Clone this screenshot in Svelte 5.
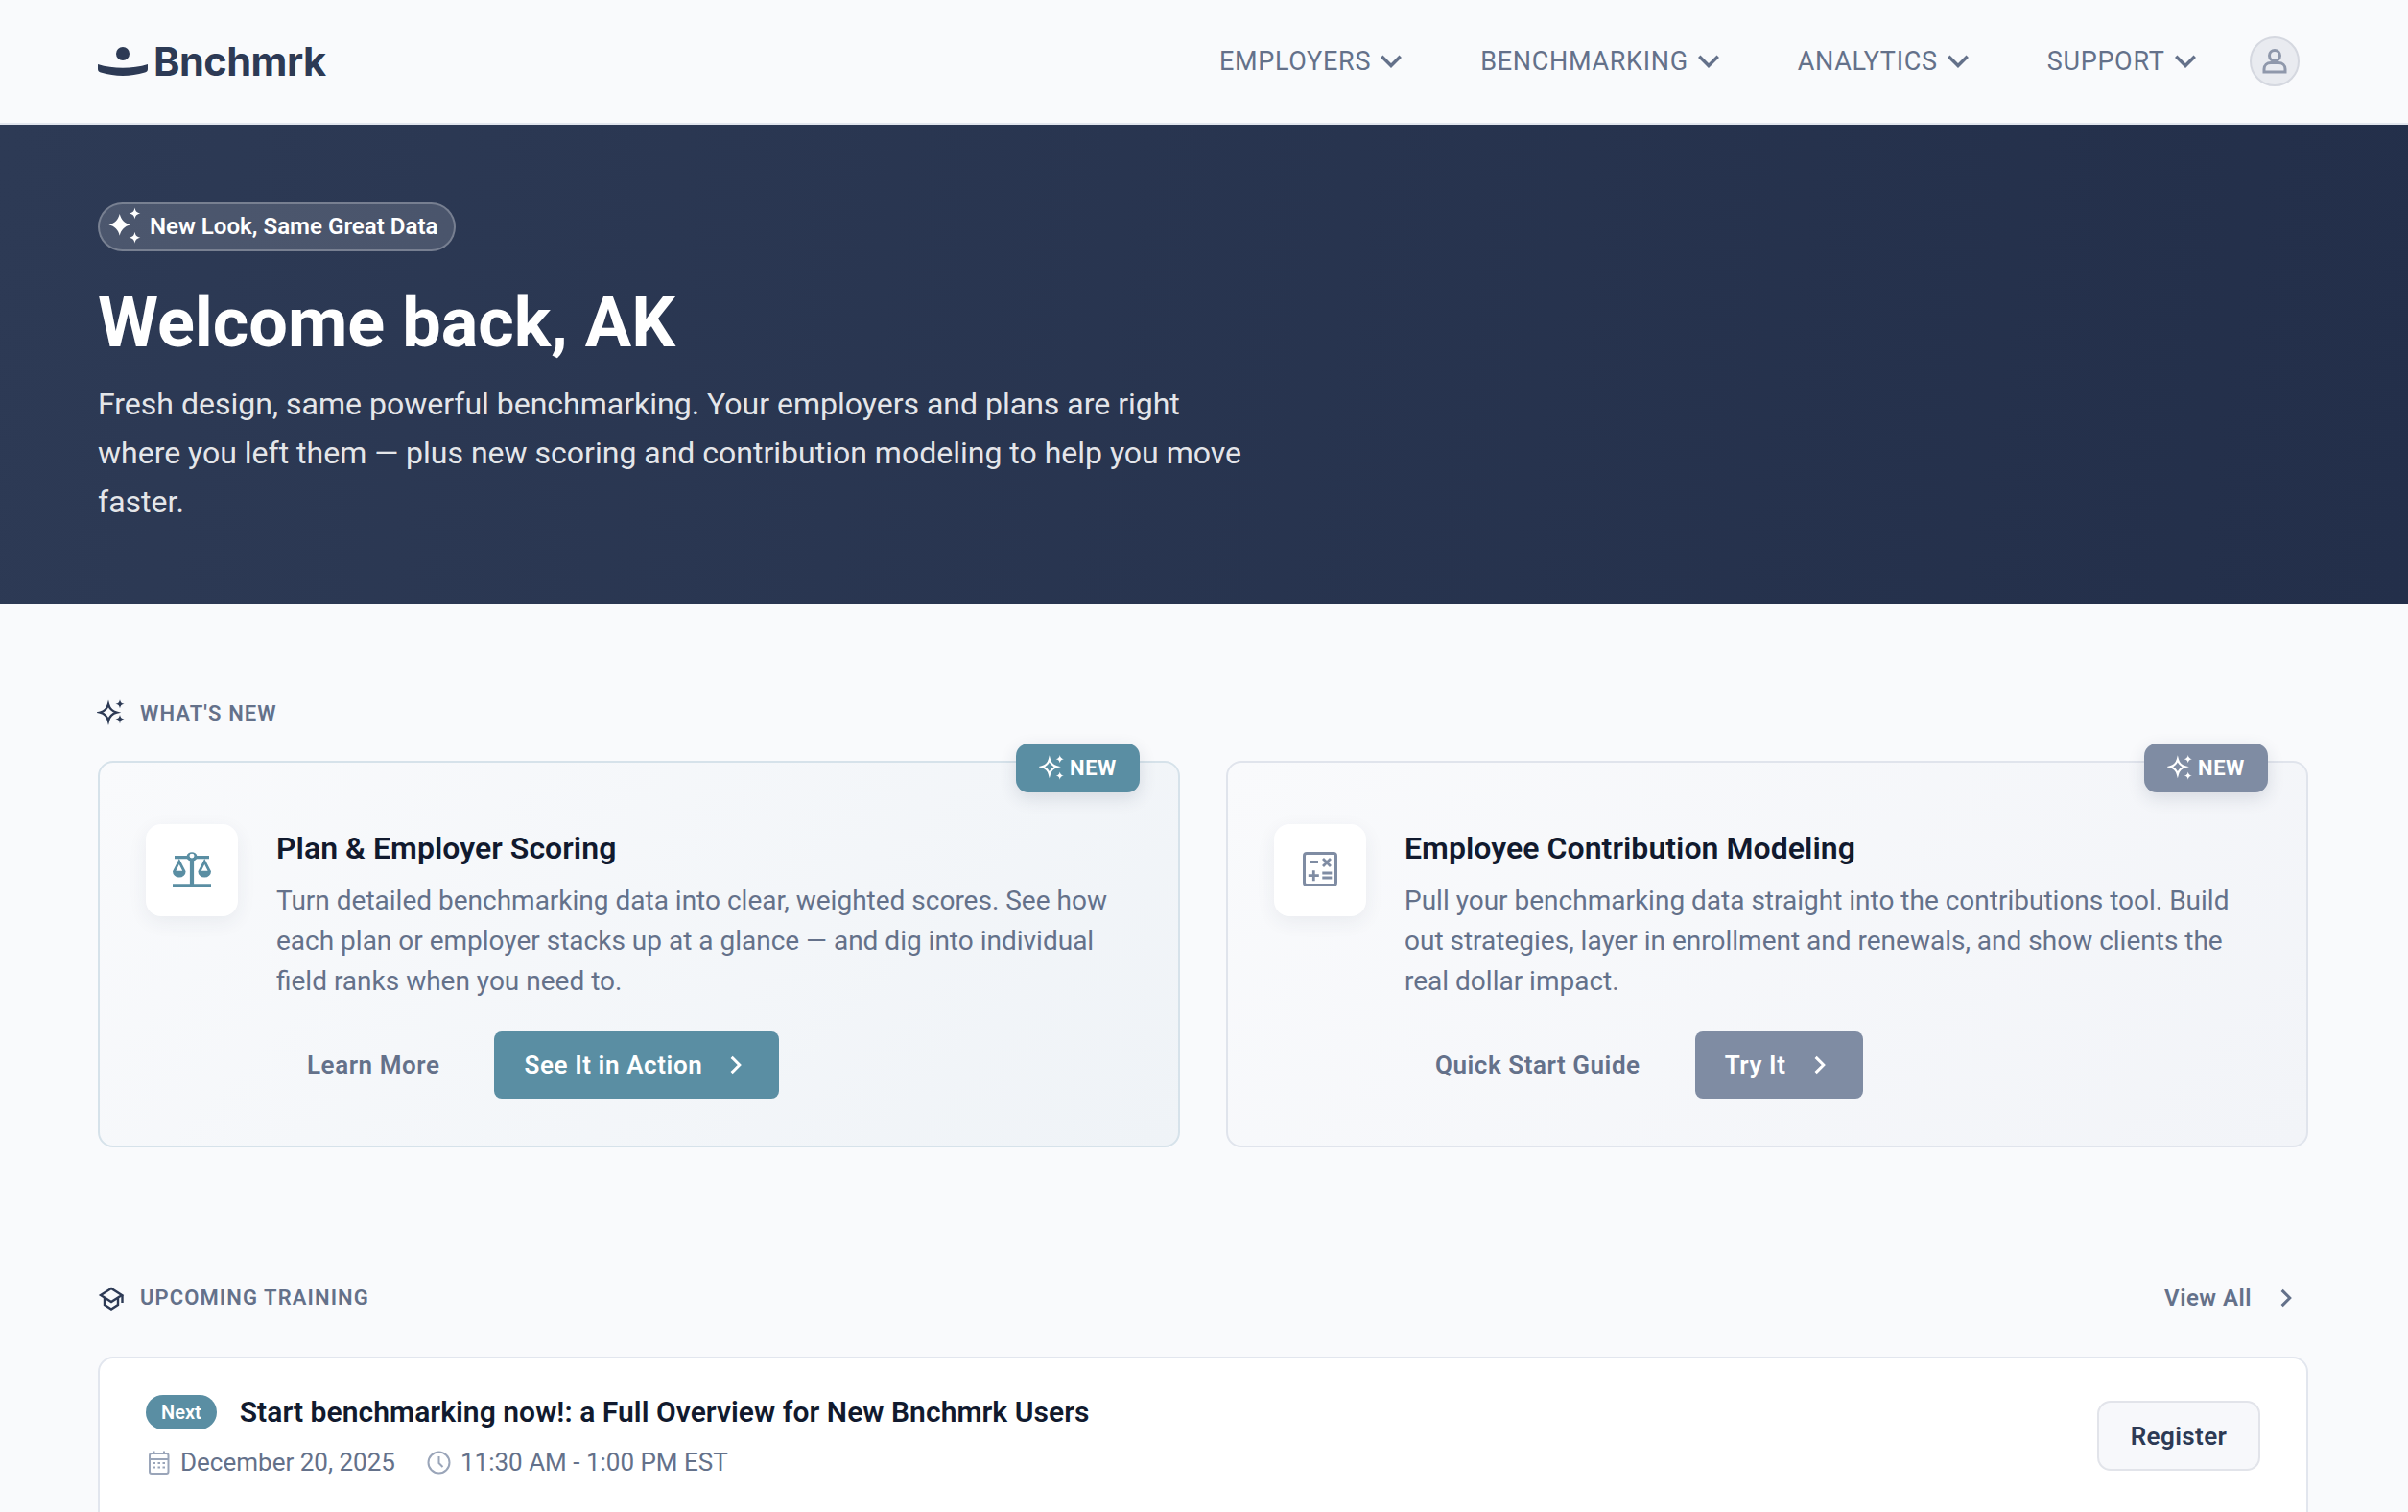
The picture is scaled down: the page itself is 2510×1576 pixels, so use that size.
<script>
    const navItems = ["EMPLOYERS", "BENCHMARKING", "ANALYTICS", "SUPPORT"];
    const sparkle = "M9 4.500c1 3.700 2.800 5.500 6.500 6.500-3.700 1-5.500 2.800-6.500 6.500-1-3.700-2.800-5.500-6.500-6.500C6.200 10 8 8.200 9 4.500Z";
    const sparkleSmallA = "M18 .9c.4 2.200 1.200 3 3.400 3.400-2.200.4-3 1.200-3.400 3.400-.4-2.200-1.200-3-3.400-3.400 2.200-.4 3-1.200 3.400-3.400Z";
    const sparkleSmallB = "M18 15.300c.4 2.200 1.200 3 3.400 3.400-2.200.4-3 1.200-3.400 3.400-.4-2.200-1.200-3-3.400-3.400 2.200-.4 3-1.200 3.400-3.400Z";
</script>

<div class="page">
    <header class="topbar">
        <div class="brand">
            <svg class="brand-mark" viewBox="0 0 52 32" aria-hidden="true">
                <circle cx="26" cy="7" r="7" fill="#2d3a55" />
                <path d="M0 18c8 2.500 17 3.700 26 3.700s18-1.200 26-3.700v5c0 2-1 3-3 3.500C41 28.500 34 30 26 30S11 28.500 3 26.500C1 26 0 25 0 23Z" fill="#2d3a55" />
            </svg>
            <span class="brand-name">Bnchmrk</span>
        </div>
        <nav class="nav">
            {#each navItems as item}
                <button type="button" class="nav-item">
                    {item}
                    <svg viewBox="0 0 24 24" class="nav-chevron" aria-hidden="true"><path d="M5.500 8.500 12 15l6.500-6.500" /></svg>
                </button>
            {/each}
            <div class="avatar">
                <svg viewBox="0 0 48 48" aria-hidden="true">
                    <circle cx="24" cy="18" r="5.500" />
                    <path d="M13 35v-3c0-4 3-6.500 7-6.500h8c4 0 7 2.500 7 6.500v3Z" />
                </svg>
            </div>
        </nav>
    </header>

    <section class="hero">
        <div class="hero-pill">
            <svg viewBox="0 0 24 24" aria-hidden="true">
                <path d={sparkle} fill="#fff" /><path d={sparkleSmallA} fill="#fff" /><path d={sparkleSmallB} fill="#fff" />
            </svg>
            New Look, Same Great Data
        </div>
        <h1>Welcome back, AK</h1>
        <p>Fresh design, same powerful benchmarking. Your employers and plans are right where you left them — plus new scoring and contribution modeling to help you move faster.</p>
    </section>

    <main class="content">
        <div class="section-head">
            <svg viewBox="0 0 24 24" class="section-icon sparkle-icon" aria-hidden="true">
                <path d={sparkle} class="outline" /><path d={sparkleSmallA} class="solid" /><path d={sparkleSmallB} class="solid" transform="translate(0 -2.500)" />
            </svg>
            <span>WHAT'S NEW</span>
        </div>

        <div class="cards">
            <article class="card card-teal">
                <div class="new-tag">
                    <svg viewBox="0 0 24 24" aria-hidden="true">
                        <path d={sparkle} class="tag-outline" /><path d={sparkleSmallA} fill="#fff" /><path d={sparkleSmallB} fill="#fff" />
                    </svg>
                    NEW
                </div>
                <div class="tile">
                    <svg class="scale-icon" viewBox="0 0 40 41" preserveAspectRatio="none" aria-hidden="true">
                        <path d="M2 5.500h12.700a5.500 5.500 0 0 1 10.600 0H38V9H25a5.500 5.500 0 0 1-2.900 2.100V37H40v4H0v-4h17.900V11.100A5.500 5.500 0 0 1 15 9H2ZM20 3a2.500 2.500 0 1 0 0 5 2.500 2.500 0 0 0 0-5Z" fill="#5a8ea3" fill-rule="evenodd" />
                        <path d="M6.800 8.500 0 23a6.800 6.800 0 0 0 13.600 0ZM6.800 15l-3.400 7.500h6.800Z" fill="#5a8ea3" fill-rule="evenodd" />
                        <path d="M33.200 8.500 26.400 23a6.800 6.800 0 0 0 13.600 0ZM33.200 15l-3.400 7.500h6.800Z" fill="#5a8ea3" fill-rule="evenodd" />
                    </svg>
                </div>
                <div class="card-body">
                    <h3>Plan &amp; Employer Scoring</h3>
                    <p>Turn detailed benchmarking data into clear, weighted scores. See how each plan or employer stacks up at a glance — and dig into individual field ranks when you need to.</p>
                    <div class="actions">
                        <button type="button" class="link-btn">Learn More</button>
                        <button type="button" class="solid-btn teal">
                            See It in Action
                            <svg viewBox="0 0 24 24" aria-hidden="true"><path d="M8.500 5.500 15 12l-6.500 6.500" /></svg>
                        </button>
                    </div>
                </div>
            </article>

            <article class="card card-slate">
                <div class="new-tag slate">
                    <svg viewBox="0 0 24 24" aria-hidden="true">
                        <path d={sparkle} class="tag-outline" /><path d={sparkleSmallA} fill="#fff" /><path d={sparkleSmallB} fill="#fff" />
                    </svg>
                    NEW
                </div>
                <div class="tile">
                    <svg class="calc-icon" viewBox="0 0 36 36" aria-hidden="true">
                        <rect x="1.500" y="1.500" width="33" height="33" rx="2.500" fill="none" stroke="#7f8ca3" stroke-width="3" />
                        <path d="M7 10.500h9M5.800 24.700h11M11.300 19.200v11M20.300 22h10M20.300 27h10M21 7l8 8M29 7l-8 8" stroke="#7f8ca3" stroke-width="2.800" fill="none" />
                    </svg>
                </div>
                <div class="card-body">
                    <h3>Employee Contribution Modeling</h3>
                    <p>Pull your benchmarking data straight into the contributions tool. Build out strategies, layer in enrollment and renewals, and show clients the real dollar impact.</p>
                    <div class="actions">
                        <button type="button" class="link-btn">Quick Start Guide</button>
                        <button type="button" class="solid-btn slate">
                            Try It
                            <svg viewBox="0 0 24 24" aria-hidden="true"><path d="M8.500 5.500 15 12l-6.500 6.500" /></svg>
                        </button>
                    </div>
                </div>
            </article>
        </div>

        <div class="section-head training-head">
            <svg viewBox="0 0 32 32" class="section-icon" aria-hidden="true">
                <path d="M17 6 6 13l11 7 11-7Z" class="hat" />
                <path d="M10 16v7l7 4.500 7-4.500v-7M28.500 13v8" class="hat" />
            </svg>
            <span>UPCOMING TRAINING</span>
            <button type="button" class="view-all">
                View All
                <svg viewBox="0 0 24 24" aria-hidden="true"><path d="M8.500 5.500 15 12l-6.500 6.500" /></svg>
            </button>
        </div>

        <div class="training">
            <div class="training-info">
                <div class="training-title">
                    <span class="next">Next</span>
                    <h4>Start benchmarking now!: a Full Overview for New Bnchmrk Users</h4>
                </div>
                <div class="training-meta">
                    <span>
                        <svg viewBox="0 0 27 27" aria-hidden="true">
                            <rect x="4" y="4" width="19.500" height="21" rx="2" class="meta-line" />
                            <path d="M4 10h19.500M8.500 1.500V5M19 1.500V5" class="meta-line" />
                            <path d="M7.500 14h2.500M12.500 14H15M17.500 14H20M7.500 18.500h2.500M12.500 18.500H15M17.500 18.500H20" class="meta-line" />
                        </svg>
                        December 20, 2025
                    </span>
                    <span>
                        <svg viewBox="0 0 27 27" aria-hidden="true">
                            <circle cx="13.500" cy="13.500" r="11" class="meta-line" />
                            <path d="M13.500 7v7l4 4" class="meta-line" />
                        </svg>
                        11:30 AM - 1:00 PM EST
                    </span>
                </div>
            </div>
            <button type="button" class="register">Register</button>
        </div>
    </main>
</div>

<style>
    :global(body) {
        overflow: hidden;
        background: #f9fafc;
    }
    .page {
        height: 1576px;
        overflow: hidden;
        font-family: Roboto, "Liberation Sans", sans-serif;
        background: #f9fafc;
        color: #64748b;
    }
    button {
        font-family: inherit;
        border: none;
        background: none;
        cursor: pointer;
        padding: 0;
    }

    .topbar {
        height: 130px;
        box-sizing: border-box;
        display: flex;
        align-items: center;
        justify-content: space-between;
        padding: 0 113px 0 102px;
        border-bottom: 2px solid #e2e6ee;
    }
    .brand {
        display: flex;
        align-items: center;
        gap: 6px;
        padding-top: 2px;
    }
    .brand-mark { width: 52px; height: 32px; }
    .brand-name {
        font-family: Inter, sans-serif;
        font-size: 41.500px;
        font-weight: 700;
        letter-spacing: -0.5px;
        color: #2d3a55;
        line-height: 1;
    }
    .nav {
        display: flex;
        align-items: center;
    }
    .nav-item {
        display: flex;
        align-items: center;
        gap: 3px;
        margin-right: 75px;
        font-size: 27px;
        letter-spacing: 0.7px;
        color: #64718a;
    }
    .nav-item:nth-child(4) { margin-right: 49.500px; }
    .nav-chevron {
        width: 36px;
        height: 36px;
        fill: none;
        stroke: #64718a;
        stroke-width: 2.300;
    }
    .avatar {
        width: 52px;
        height: 52px;
        border-radius: 50%;
        background: #e9ebf0;
        border: 2px solid #d5d8e0;
        display: flex;
        align-items: center;
        justify-content: center;
        box-sizing: border-box;
    }
    .avatar svg { width: 48px; height: 48px; flex: none; fill: none; stroke: #8f98ab; stroke-width: 3; }

    .hero {
        height: 500px;
        box-sizing: border-box;
        padding: 81px 102px 0;
        background: linear-gradient(100deg, #2d3a55 0%, #232f4a 100%);
        color: #fff;
    }
    .hero-pill {
        display: inline-flex;
        align-items: center;
        gap: 5px;
        height: 51px;
        box-sizing: border-box;
        padding: 0 16px 1px 5px;
        border: 2px solid rgba(255, 255, 255, 0.25);
        border-radius: 26px;
        background: rgba(255, 255, 255, 0.15);
        font-size: 24.100px;
        font-weight: 600;
    }
    .hero-pill svg { width: 42px; height: 42px; }
    .hero h1 {
        margin: 32px 0 0;
        font-size: 72px;
        font-weight: 700;
        line-height: 86px;
    }
    .hero p {
        margin: 16px 0 0;
        max-width: 1200px;
        font-size: 32px;
        line-height: 51.200px;
        color: rgba(255, 255, 255, 0.9);
    }

    .content { padding: 0 104px 0 102px; }
    .section-head {
        display: flex;
        align-items: center;
        gap: 15px;
        padding-top: 98px;
        font-size: 22px;
        font-weight: 600;
        letter-spacing: 1.100px;
        color: #64718a;
        line-height: 30px;
    }
    .section-icon { width: 32px; height: 32px; margin-left: -3px; flex: none; }
    .sparkle-icon { margin-left: -1px; margin-right: -2px; }
    .outline { fill: none; stroke: #2d3a55; stroke-width: 1.800; }
    .solid { fill: #2d3a55; }
    .hat { fill: none; stroke: #2d3a55; stroke-width: 2.400; }

    .cards {
        display: grid;
        grid-template-columns: 1fr 1fr;
        gap: 48px;
        margin-top: 33px;
    }
    .card {
        position: relative;
        display: flex;
        gap: 40px;
        height: 403px;
        box-sizing: border-box;
        padding: 64px 48px 0;
        border: 2px solid #e0e4ec;
        border-radius: 16px;
    }
    .card-teal {
        border-color: #d6e2ea;
        background: linear-gradient(135deg, #f9fafc 0%, #eff3f7 100%);
    }
    .card-slate {
        background: linear-gradient(135deg, #f9fafc 0%, #f2f4f8 100%);
    }
    .new-tag {
        position: absolute;
        top: -20px;
        right: 40px;
        display: flex;
        align-items: center;
        justify-content: center;
        gap: 3px;
        width: 129px;
        height: 51px;
        border-radius: 13px;
        background: #5a8ea3;
        color: #fff;
        font-size: 22px;
        font-weight: 700;
        letter-spacing: 0.6px;
        box-shadow: 0 6px 18px rgba(45, 58, 85, 0.14);
    }
    .new-tag.slate { background: #7f8ca3; }
    .new-tag svg { width: 29px; height: 29px; }
    .tag-outline { fill: none; stroke: #fff; stroke-width: 1.800; }
    .tile {
        flex: none;
        width: 96px;
        height: 96px;
        border-radius: 16px;
        background: #fff;
        display: flex;
        align-items: center;
        justify-content: center;
        box-shadow: 0 6px 20px rgba(45, 58, 85, 0.07);
    }
    .scale-icon { width: 40px; height: 38px; margin-top: -2px; }
    .calc-icon { width: 36px; height: 36px; margin-top: -2px; }
    .card-body { flex: 1; min-width: 0; }
    .card-body h3 {
        margin: 5px 0 0;
        font-size: 32px;
        font-weight: 600;
        letter-spacing: 0.05px;
        line-height: 40px;
        color: #111a2e;
    }
    .card-body p {
        margin: 14px 0 0;
        font-size: 28px;
        line-height: 42px;
        color: #64718a;
    }
    .actions {
        display: flex;
        align-items: center;
        gap: 57px;
        margin-top: 31px;
        padding-left: 32px;
    }
    .link-btn {
        font-size: 26px;
        font-weight: 600;
        letter-spacing: 0.55px;
        color: #64718a;
    }
    .solid-btn {
        display: flex;
        align-items: center;
        gap: 20px;
        height: 70px;
        padding: 0 30px 0 31px;
        border-radius: 8px;
        color: #fff;
        font-size: 26px;
        font-weight: 600;
        letter-spacing: 0.6px;
    }
    .solid-btn.teal { background: #5a8ea3; }
    .solid-btn.slate { background: #7f8ca3; }
    .solid-btn svg { width: 30px; height: 30px; fill: none; stroke: #fff; stroke-width: 2.400; }

    .training-head { padding-top: 141px; }
    .view-all {
        margin-left: auto;
        display: flex;
        align-items: center;
        gap: 21px;
        margin-right: 8px;
        font-size: 24px;
        font-weight: 600;
        letter-spacing: 0.5px;
        color: #64718a;
    }
    .view-all svg { width: 30px; height: 30px; fill: none; stroke: #64718a; stroke-width: 2.400; }

    .training {
        display: flex;
        align-items: flex-start;
        justify-content: space-between;
        margin-top: 45px;
        height: 300px;
        box-sizing: border-box;
        padding: 38px 48px 0;
        border: 2px solid #e2e6ee;
        border-radius: 16px;
        background: #fff;
    }
    .training-title {
        display: flex;
        align-items: center;
        gap: 24px;
    }
    .next {
        display: flex;
        align-items: center;
        height: 36px;
        padding: 0 16px;
        border-radius: 18px;
        background: #5a8ea3;
        color: #fff;
        font-size: 20px;
        font-weight: 600;
    }
    .training-title h4 {
        margin: 0;
        font-size: 30px;
        font-weight: 600;
        letter-spacing: 0.05px;
        line-height: 36px;
        color: #111a2e;
    }
    .training-meta {
        display: flex;
        gap: 32px;
        margin-top: 16px;
        font-size: 26px;
        line-height: 36px;
        color: #64718a;
    }
    .training-meta span { display: flex; align-items: center; gap: 9px; }
    .training-meta svg { width: 27px; height: 27px; }
    .meta-line { fill: none; stroke: #9aa5b9; stroke-width: 2; }
    .register {
        width: 170px;
        height: 73px;
        margin-top: 6px;
        border: 2px solid #e2e4ea;
        border-radius: 14px;
        background: #f7f8fb;
        color: #2d3a55;
        font-size: 26px;
        font-weight: 600;
        letter-spacing: 0.4px;
    }
</style>
